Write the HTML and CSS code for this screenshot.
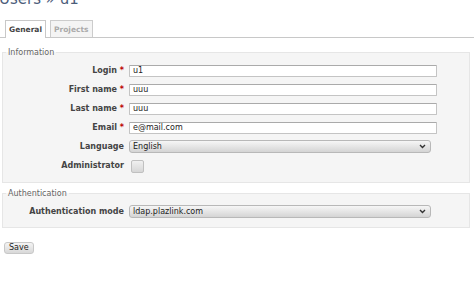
FILE: index.html
```html
<!DOCTYPE html>
<html lang="en">
<head>
<meta charset="UTF-8">
<title>Users » u1</title>
<link rel="stylesheet" href="styles.css">
</head>
<body>

<h2 class="title">Users » u1</h2>

<div class="tabs">
  <a class="tab selected" href="#">General</a>
  <a class="tab" href="#">Projects</a>
</div>

<form class="user-form">
  <fieldset class="box">
    <legend>Information</legend>
    <div class="row">
      <label>Login <span class="req">*</span></label>
      <input type="text" class="field" value="u1">
    </div>
    <div class="row">
      <label>First name <span class="req">*</span></label>
      <input type="text" class="field" value="uuu">
    </div>
    <div class="row">
      <label>Last name <span class="req">*</span></label>
      <input type="text" class="field" value="uuu">
    </div>
    <div class="row">
      <label>Email <span class="req">*</span></label>
      <input type="text" class="field" value="e@mail.com">
    </div>
    <div class="row">
      <label>Language</label>
      <span class="select-wrap">
        <select class="select"><option>English</option></select>
        <svg class="chevron" width="7" height="5" viewBox="0 0 7 5"><path d="M1 1 L3.5 3.5 L6 1" fill="none" stroke="#333" stroke-width="1.4"/></svg>
      </span>
    </div>
    <div class="row">
      <label>Administrator</label>
      <span class="check"></span>
    </div>
  </fieldset>

  <fieldset class="box auth">
    <legend>Authentication</legend>
    <div class="row">
      <label>Authentication mode</label>
      <span class="select-wrap">
        <select class="select"><option>ldap.plazlink.com</option></select>
        <svg class="chevron" width="7" height="5" viewBox="0 0 7 5"><path d="M1 1 L3.5 3.5 L6 1" fill="none" stroke="#333" stroke-width="1.4"/></svg>
      </span>
    </div>
  </fieldset>

  <button type="button" class="save">Save</button>
</form>

</body>
</html>
```

FILE: styles.css
```css
body {
  margin: 0;
  background: white;
  color: #333;
  font-family: "DejaVu Sans", Verdana, sans-serif;
  font-size: 8px;
  width: 474px;
  overflow: hidden;
}

.title {
  margin: -9px 0 0 -1px;
  font-size: 15px;
  line-height: 16px;
  font-weight: normal;
  color: #4b5d7a;
}

.tabs {
  display: flex;
  gap: 4px;
  margin-top: 13px;
  padding-left: 5px;
  border-bottom: 1px solid #c8c8c8;
  height: 17px;
}

.tab {
  display: block;
  height: 16px;
  line-height: 17px;
  padding: 0 3px;
  border: 1px solid #ccc;
  border-bottom: none;
  background: #f4f4f4;
  color: #aaa;
  font-size: 7.5px;
  font-weight: bold;
  text-decoration: none;
}

.tab.selected {
  background: white;
  color: #444;
  height: 17px;
  border-color: #c8c8c8;
}

.user-form {
  padding: 0 4px 0 2px;
}

.box {
  margin: 10px 0 0 0;
  padding: 4px 0 7px 0;
  border: 1px solid #e6e6e6;
  background: #f5f5f5;
}

.box legend {
  padding: 0 2px;
  margin-left: 3px;
  color: #666;
  font-size: 8px;
}

.row {
  display: flex;
  align-items: center;
  height: 19px;
}

.row label {
  width: 121px;
  text-align: right;
  font-weight: bold;
  color: #444;
  margin-right: 5px;
}

.req {
  color: #bb0000;
}

.field {
  width: 308px;
  height: 12px;
  box-sizing: border-box;
  margin: 0;
  padding: 0 3px;
  border: 1px solid #c4c4c4;
  border-top-color: #aaa;
  border-radius: 1px;
  background: white;
  font-family: "DejaVu Sans", Verdana, sans-serif;
  font-size: 8px;
  color: #222;
}

.select-wrap {
  position: relative;
  display: block;
}

.select {
  appearance: none;
  -webkit-appearance: none;
  width: 302px;
  height: 13px;
  margin: 0;
  padding: 0 3px;
  border: 1px solid #b8b8b8;
  border-radius: 3px;
  background: linear-gradient(#f6f6f6, #e2e2e2 60%, #d4d4d4);
  font-family: "DejaVu Sans", Verdana, sans-serif;
  font-size: 8px;
  color: #222;
}

.chevron {
  position: absolute;
  right: 5px;
  top: 4px;
}

.check {
  display: block;
  width: 11px;
  height: 11px;
  margin: 2px 0 0 2px;
  border: 1px solid #c0c0c0;
  border-radius: 2px;
  background: linear-gradient(#f0f0f0, #d6d6d6);
}

.auth {
  margin-top: 6px;
  padding: 4px 0 6px 0;
}

.save {
  display: block;
  margin: 14px 0 0 2px;
  height: 12px;
  padding: 0 4px;
  border: 1px solid #c8c8c8;
  border-radius: 3px;
  background: linear-gradient(#f4f4f4, #d8d8d8);
  font-family: "DejaVu Sans", Verdana, sans-serif;
  font-size: 8px;
  line-height: 10px;
  color: #222;
}
```
